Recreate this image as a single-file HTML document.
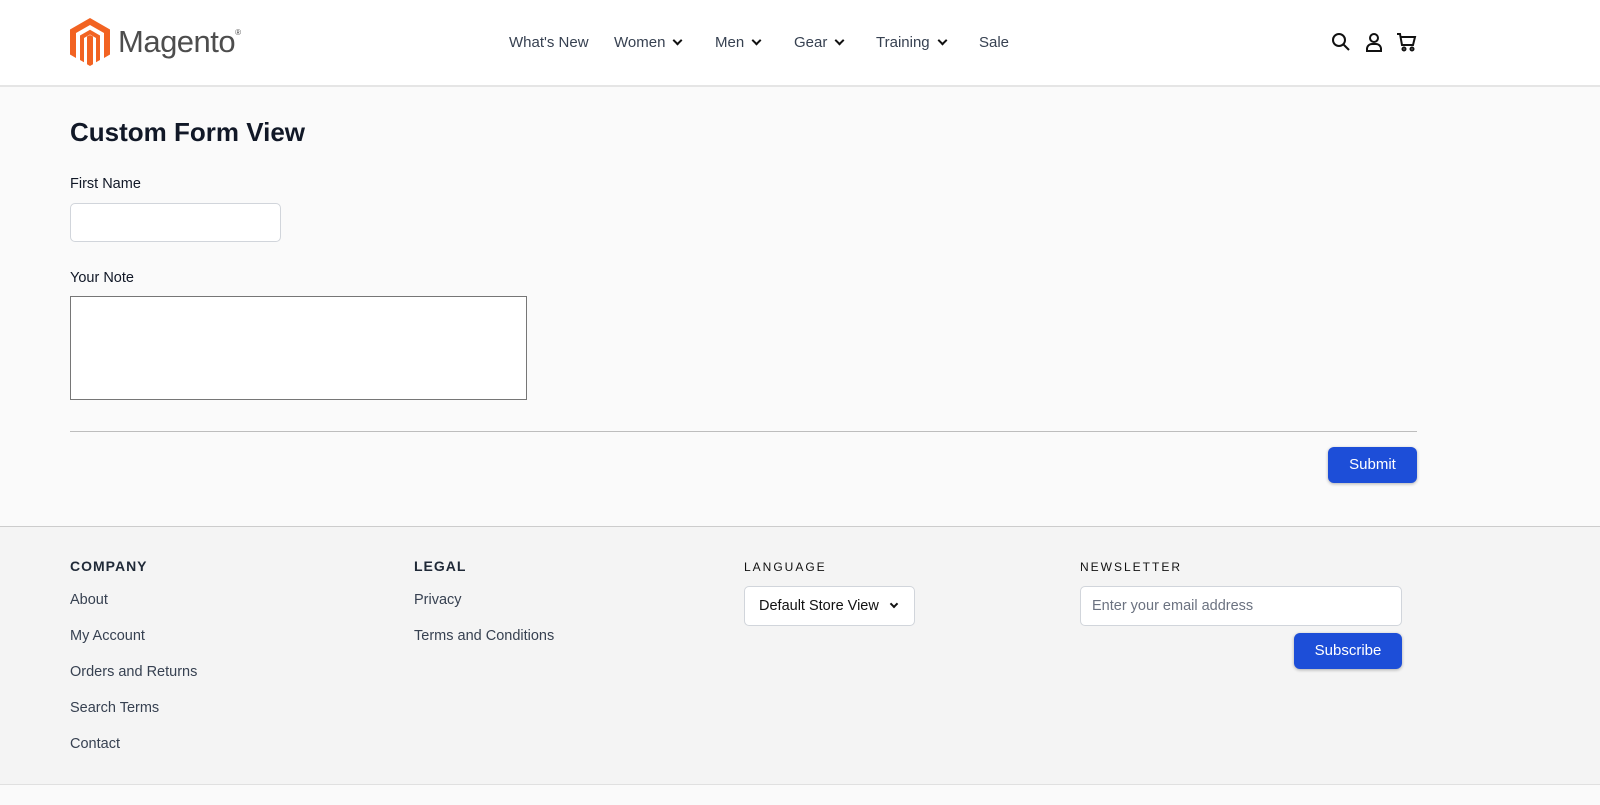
<!DOCTYPE html>
<html><head><meta charset="utf-8"><style>
*{box-sizing:border-box;margin:0;padding:0}
body{width:1600px;height:805px;font-family:"Liberation Sans",sans-serif;background:#fafafa;color:#111827;overflow:hidden;position:relative}
header{position:absolute;top:0;left:0;width:1600px;height:87px;background:#fff;border-bottom:2px solid #e5e5e5}
.nav{position:absolute;top:34px;font-size:15px;color:#374151}
.nav span{position:absolute;white-space:nowrap}
.chev{display:inline-block;width:7px;height:7px;border-right:2px solid #111;border-bottom:2px solid #111;transform:rotate(45deg);margin-left:9px;position:relative;top:-3px}
h1{position:absolute;left:70px;top:117px;font-size:26px;font-weight:bold;color:#111827}
.lbl{position:absolute;left:70px;font-size:14.5px;color:#111827}
.in{position:absolute;background:#fff;border:1px solid #d1d5db;border-radius:5px}
footer{position:absolute;top:526px;left:0;width:1600px;height:259px;background:#f4f4f4;border-top:1px solid #ccc;border-bottom:1px solid #e0e0e0}
.fh{position:absolute;font-size:14px;font-weight:bold;letter-spacing:1px;color:#1f2937}
.fh2{position:absolute;font-size:12px;letter-spacing:2px;color:#111}
.fl{position:absolute;font-size:14.5px;color:#374151}
.btn{position:absolute;background:#1d4ed8;color:#fff;border-radius:6px;font-size:15px;text-align:center;box-shadow:0 1px 3px rgba(0,0,0,.3)}
</style></head><body>
<header>
<svg style="position:absolute;left:70px;top:18px" width="40" height="48" viewBox="0 0 40 48"><path d="M20 0L40 11.5V36.5L34 40V15L20 7 6 15V40L0 36.5V11.5Z" fill="#f26322"/><path d="M10 17.5L20 11.7 30 17.5V42L26 44.3V20L20 16.5 14 20V44.3L10 42Z" fill="#f26322"/><path d="M17 18.5L20 17 23 18.5V46.3L20 48 17 46.3Z" fill="#f26322"/></svg>
<div style="position:absolute;left:118px;top:24px;font-size:31px;color:#4d4d4d;letter-spacing:-0.5px">Magento<sup style="font-size:8px;vertical-align:top;position:relative;top:4px">®</sup></div>
<div class="nav"><span style="left:509px">What's New</span><span style="left:614px">Women<i class="chev"></i></span><span style="left:715px">Men<i class="chev"></i></span><span style="left:794px">Gear<i class="chev"></i></span><span style="left:876px">Training<i class="chev"></i></span><span style="left:979px">Sale</span></div>
<svg style="position:absolute;left:1331px;top:32px" width="20" height="20" viewBox="0 0 20 20" fill="none" stroke="#111" stroke-width="2"><circle cx="8" cy="8" r="6"/><path d="M12.5 12.5L18 18"/></svg>
<svg style="position:absolute;left:1365px;top:32px" width="18" height="20" viewBox="0 0 18 20" fill="none" stroke="#111" stroke-width="2"><circle cx="9" cy="6" r="4"/><path d="M2 19v-2a5 5 0 0 1 5-5h4a5 5 0 0 1 5 5v2z"/></svg>
<svg style="position:absolute;left:1396px;top:32px" width="22" height="20" viewBox="0 0 22 20" fill="none" stroke="#111" stroke-width="2"><path d="M1 2h3l2 11h11l2-8H5"/><circle cx="8" cy="17" r="1.5"/><circle cx="16" cy="17" r="1.5"/></svg>
</header>
<h1>Custom Form View</h1>
<div class="lbl" style="top:176px">First Name</div>
<div class="in" style="left:70px;top:203px;width:211px;height:39px"></div>
<div class="lbl" style="top:270px">Your Note</div>
<div style="position:absolute;left:70px;top:296px;width:457px;height:104px;background:#fff;border:1px solid #767676"></div>
<div style="position:absolute;left:70px;top:431px;width:1347px;height:1px;background:#bdbdbd"></div>
<div class="btn" style="left:1328px;top:447px;width:89px;height:36px;line-height:36px">Submit</div>
<footer>
<div class="fh" style="left:70px;top:31px">COMPANY</div>
<div class="fl" style="left:70px;top:65px">About</div>
<div class="fl" style="left:70px;top:101px">My Account</div>
<div class="fl" style="left:70px;top:137px">Orders and Returns</div>
<div class="fl" style="left:70px;top:173px">Search Terms</div>
<div class="fl" style="left:70px;top:209px">Contact</div>
<div class="fh" style="left:414px;top:31px">LEGAL</div>
<div class="fl" style="left:414px;top:65px">Privacy</div>
<div class="fl" style="left:414px;top:101px">Terms and Conditions</div>
<div class="fh2" style="left:744px;top:33px">LANGUAGE</div>
<div class="in" style="left:744px;top:59px;width:171px;height:40px;font-size:14.5px;color:#111;padding:11px 14px">Default Store View<i class="chev" style="width:6px;height:6px;margin-left:12px"></i></div>
<div class="fh2" style="left:1080px;top:33px">NEWSLETTER</div>
<div class="in" style="left:1080px;top:59px;width:322px;height:40px;font-size:14.5px;color:#6b7280;padding:11px 11px">Enter your email address</div>
<div class="btn" style="left:1294px;top:106px;width:108px;height:36px;line-height:36px">Subscribe</div>
</footer>
</body></html>
